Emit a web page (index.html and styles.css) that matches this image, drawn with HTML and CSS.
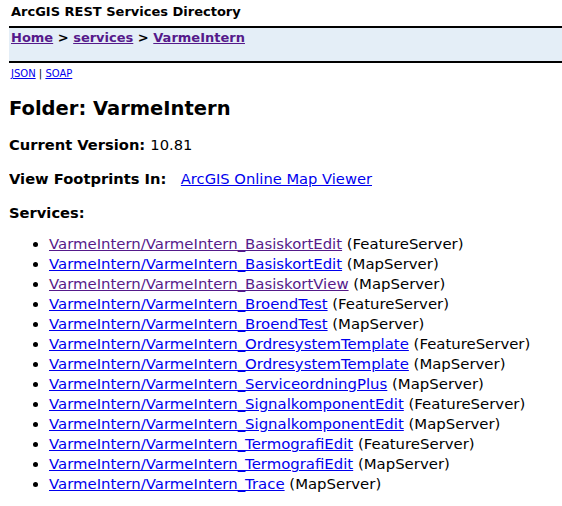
FILE: index.html
```html
<!DOCTYPE html>
<html>
<head>
<meta charset="utf-8">
<title>Folder: VarmeIntern</title>
<link rel="stylesheet" href="styles.css">
</head>
<body>
<div class="title">ArcGIS REST Services Directory</div>
<div class="nav">
  <div class="crumbs"><a class="visited" href="#">Home</a> &gt; <a class="visited" href="#">services</a> &gt; <a class="visited" href="#">VarmeIntern</a></div>
</div>
<div class="apiref"><a href="#">JSON</a> | <a href="#">SOAP</a></div>
<h2 class="heading">Folder: VarmeIntern</h2>
<div class="rbody">
  <p class="row"><b>Current Version: </b>10.81</p>
  <p class="row"><b>View Footprints In: </b>&nbsp;&nbsp;<a href="#">ArcGIS Online Map Viewer</a></p>
  <p class="row last"><b>Services: </b></p>
  <ul class="services">
    <li><a class="visited" href="#">VarmeIntern/VarmeIntern_BasiskortEdit</a> (FeatureServer)</li>
    <li><a href="#">VarmeIntern/VarmeIntern_BasiskortEdit</a> (MapServer)</li>
    <li><a class="visited" href="#">VarmeIntern/VarmeIntern_BasiskortView</a> (MapServer)</li>
    <li><a href="#">VarmeIntern/VarmeIntern_BroendTest</a> (FeatureServer)</li>
    <li><a href="#">VarmeIntern/VarmeIntern_BroendTest</a> (MapServer)</li>
    <li><a href="#">VarmeIntern/VarmeIntern_OrdresystemTemplate</a> (FeatureServer)</li>
    <li><a href="#">VarmeIntern/VarmeIntern_OrdresystemTemplate</a> (MapServer)</li>
    <li><a href="#">VarmeIntern/VarmeIntern_ServiceordningPlus</a> (MapServer)</li>
    <li><a href="#">VarmeIntern/VarmeIntern_SignalkomponentEdit</a> (FeatureServer)</li>
    <li><a href="#">VarmeIntern/VarmeIntern_SignalkomponentEdit</a> (MapServer)</li>
    <li><a href="#">VarmeIntern/VarmeIntern_TermografiEdit</a> (FeatureServer)</li>
    <li><a href="#">VarmeIntern/VarmeIntern_TermografiEdit</a> (MapServer)</li>
    <li><a href="#">VarmeIntern/VarmeIntern_Trace</a> (MapServer)</li>
  </ul>
</div>
</body>
</html>
```
FILE: styles.css
```css
html, body {
  background: #fff;
}
body {
  margin: 0 0 0 9px;
  font-family: "DejaVu Sans", Verdana, sans-serif;
  font-size: 13px;
  color: #000;
}
a { color: #0000ee; }
a.visited { color: #551a8b; }
.title {
  font-weight: bold;
  font-size: 13px;
  padding: 4px 0 0 2px;
  height: 22px;
}
.nav {
  background: #e4eef7;
  border-top: 2px solid #000;
  border-bottom: 2px solid #000;
  height: 33px;
  box-sizing: content-box;
}
.crumbs {
  font-weight: bold;
  font-size: 13px;
  padding: 2px 0 0 2px;
}
.apiref {
  font-size: 10px;
  padding: 5px 0 0 2px;
}
.heading {
  font-size: 19.5px;
  margin: 18px 0 0 0;
}
.rbody {
  margin-top: 16px;
  font-size: 14.7px;
}
.row {
  margin: 0 0 17px 0;
}
.row.last {
  margin-bottom: 0;
}
.services {
  margin: 13px 0 0 0;
  padding-left: 40px;
  font-size: 14.9px;
}
.services li {
  line-height: 20px;
}
```
